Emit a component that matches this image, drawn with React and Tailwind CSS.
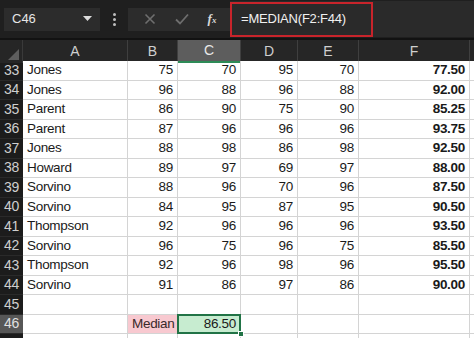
import React from "react";

const rows = [
  [33, "Jones", 75, 70, 95, 70, "77.50"],
  [34, "Jones", 96, 88, 96, 88, "92.00"],
  [35, "Parent", 86, 90, 75, 90, "85.25"],
  [36, "Parent", 87, 96, 96, 96, "93.75"],
  [37, "Jones", 88, 98, 86, 98, "92.50"],
  [38, "Howard", 89, 97, 69, 97, "88.00"],
  [39, "Sorvino", 88, 96, 70, 96, "87.50"],
  [40, "Sorvino", 84, 95, 87, 95, "90.50"],
  [41, "Thompson", 92, 96, 96, 96, "93.50"],
  [42, "Sorvino", 96, 75, 96, 75, "85.50"],
  [43, "Thompson", 92, 96, 98, 96, "95.50"],
  [44, "Sorvino", 91, 86, 97, 86, "90.00"],
];

const cols = "grid-cols-[23px_105px_50px_63px_57px_61px_111px_1fr]";
const cell = "border-r border-b border-[#d4d4d4] flex items-center px-[4px] h-[19.5px] text-[13.5px] tracking-[-0.3px] text-[#1a1a1a] whitespace-nowrap";
const rh = "flex items-center justify-center h-[19.5px] text-[14px] tracking-[-0.3px] text-[#cfcfcf] bg-[#1c1c1c] border-b border-[#2a2a2a]";

export default function App() {
  return (
    <div className="w-[474px] h-[338px] overflow-hidden bg-white" style={{ fontFamily: '"Liberation Sans", Arial, sans-serif' }}>
      {/* Top bar */}
      <div className="h-[38px] bg-[#1f1f1f] flex items-center">
        <div className="ml-[4px] w-[96px] h-[23px] bg-[#2c2c2c] flex items-center justify-between px-[8px]">
          <span className="text-[13px] text-[#e6e6e6]">C46</span>
          <svg width="9" height="6" viewBox="0 0 9 6"><path d="M0 0 H9 L4.5 5 Z" fill="#dcdcdc" /></svg>
        </div>
        <div className="w-[28px] flex flex-col items-center gap-[2px]">
          <span className="w-[3px] h-[3px] rounded-full bg-[#bdbdbd]" />
          <span className="w-[3px] h-[3px] rounded-full bg-[#bdbdbd]" />
          <span className="w-[3px] h-[3px] rounded-full bg-[#bdbdbd]" />
        </div>
        <div className="w-[104px] h-[23px] bg-[#2c2c2c] flex items-center justify-around px-[6px]">
          <svg width="12" height="12" viewBox="0 0 12 12"><path d="M1.5 1.5 L10.5 10.5 M10.5 1.5 L1.5 10.5" stroke="#6e6e6e" strokeWidth="1.6" /></svg>
          <svg width="14" height="12" viewBox="0 0 14 12"><path d="M1 6.5 L5 10.5 L13 1.5" stroke="#6e6e6e" strokeWidth="1.8" fill="none" /></svg>
          <span className="text-[13px] text-[#d8d8d8] italic font-bold" style={{ fontFamily: '"Liberation Serif", serif' }}>f<span className="text-[9px]">x</span></span>
        </div>
        <div className="flex-1 h-[36px] ml-[-2px] bg-[#2a2a2a] flex items-center self-center">
          <div className="w-[143px] h-[35px] border-[2.5px] border-[#c8242b] flex items-center pl-[9px]">
            <span className="text-[13px] tracking-[-0.2px] text-[#f0f0f0]">=MEDIAN(F2:F44)</span>
          </div>
        </div>
      </div>
      <div className="h-[2px] bg-[#121212]" />
      {/* Column headers */}
      <div className={`grid ${cols} h-[21px] bg-[#262626]`}>
        <div className="relative bg-[#262626] border-r border-[#3a3a3a]">
          <svg className="absolute right-[3px] bottom-[3px]" width="11" height="11" viewBox="0 0 11 11"><path d="M11 0 V11 H0 Z" fill="#5e5e5e" /></svg>
        </div>
        {["A", "B"].map((c) => (
          <div key={c} className="flex items-center justify-center text-[14px] text-[#cfcfcf] border-r border-[#3f3f3f]">{c}</div>
        ))}
        <div className="flex items-center justify-center text-[14px] text-[#e8e8e8] bg-[#5d5d5d] border-b-2 border-[#2e8b57] border-r border-r-[#3f3f3f]">C</div>
        {["D", "E", "F"].map((c) => (
          <div key={c} className="flex items-center justify-center text-[14px] text-[#cfcfcf] border-r border-[#3f3f3f]">{c}</div>
        ))}
        <div />
      </div>
      {/* Rows */}
      <div className={`grid ${cols}`}>
        {rows.map((r) => (
          <React.Fragment key={r[0]}>
            <div className={rh}>{r[0]}</div>
            <div className={cell}>{r[1]}</div>
            <div className={`${cell} justify-end`}>{r[2]}</div>
            <div className={`${cell} justify-end`}>{r[3]}</div>
            <div className={`${cell} justify-end`}>{r[4]}</div>
            <div className={`${cell} justify-end`}>{r[5]}</div>
            <div className={`${cell} justify-end font-bold`}>{r[6]}</div>
            <div className={cell} />
          </React.Fragment>
        ))}
        <div className={rh}>45</div>
        <div className={cell} />
        <div className={cell} />
        <div className={cell} />
        <div className={cell} />
        <div className={cell} />
        <div className={cell} />
        <div className={cell} />

        <div className={`${rh} bg-[#575757] text-[#e0e0e0]`}>46</div>
        <div className={cell} />
        <div className={`${cell} bg-[#f8c9d0] text-[#3a2a2a] px-[3px]`}>Median</div>
        <div className={`${cell} relative justify-end bg-[#c7ecd0]`}>
          86.50
          <span className="absolute left-[-1px] top-[-1px] right-[-1px] bottom-[-1px] border-2 border-[#217346]" />
          <span className="absolute right-[-4px] bottom-[-4px] w-[6px] h-[6px] bg-[#217346] border border-white" />
        </div>
        <div className={cell} />
        <div className={cell} />
        <div className={cell} />
        <div className={cell} />

        <div className={rh}></div>
        <div className={cell} />
        <div className={cell} />
        <div className={cell} />
        <div className={cell} />
        <div className={cell} />
        <div className={cell} />
        <div className={cell} />
      </div>
    </div>
  );
}
